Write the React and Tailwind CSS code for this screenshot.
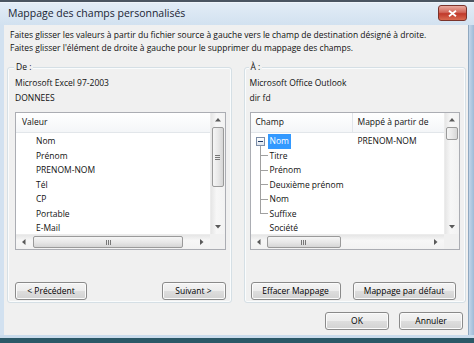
import React from 'react';

function Tri({ dir }) {
    const d = {
        up: 'M0 3.5 L3 0 L6 3.5 Z',
        down: 'M0 0 L3 3.5 L6 0 Z',
        left: 'M3.5 0 L0 3 L3.5 6 Z',
        right: 'M0 0 L3.5 3 L0 6 Z',
    }[dir];
    const vertical = dir === 'up' || dir === 'down';
    return (
        <svg width={vertical ? 6 : 4} height={vertical ? 4 : 6} viewBox={vertical ? '0 0 6 4' : '0 0 4 6'}>
            <path d={d} fill="#5a5a5a" />
        </svg>
    );
}

function VScroll({ thumb, grip }) {
    return (
        <div className="w-[15px] flex flex-col bg-[linear-gradient(90deg,#e6e6e6,#f7f7f7_40%,#f2f2f2)] border-l border-[#ececec]">
            <div className="h-[14px] flex items-center justify-center"><Tri dir="up" /></div>
            <div
                style={{ height: thumb }}
                className="mx-[1px] rounded-[2px] border border-[#9a9a9a] bg-[linear-gradient(90deg,#f5f5f5,#e8e8e8_50%,#d6d6d6)] flex items-center justify-center"
            >
                {grip && (
                    <div className="flex flex-col gap-[1px]">
                        <div className="w-[5px] h-[1px] bg-[#777]" />
                        <div className="w-[5px] h-[1px] bg-[#777]" />
                        <div className="w-[5px] h-[1px] bg-[#777]" />
                    </div>
                )}
            </div>
            <div className="flex-1" />
            <div className="h-[14px] flex items-center justify-center"><Tri dir="down" /></div>
        </div>
    );
}

function HScroll({ offset, thumb }) {
    return (
        <div className="h-[15px] flex bg-[linear-gradient(#e6e6e6,#f7f7f7_40%,#f2f2f2)] border-t border-[#ececec]">
            <div className="w-[16px] flex items-center justify-center"><Tri dir="left" /></div>
            <div
                style={{ width: thumb, marginLeft: offset }}
                className="my-[1px] rounded-[2px] border border-[#9a9a9a] bg-[linear-gradient(#f5f5f5,#e8e8e8_50%,#d6d6d6)] flex items-center justify-center"
            >
                <div className="flex gap-[1px] h-[5px]">
                    <div className="w-[1px] bg-[#777]" />
                    <div className="w-[1px] bg-[#777]" />
                    <div className="w-[1px] bg-[#777]" />
                </div>
            </div>
            <div className="flex-1" />
            <div className="w-[16px] flex items-center justify-center"><Tri dir="right" /></div>
        </div>
    );
}

function Btn({ children, w }) {
    return (
        <button
            style={{ width: w }}
            className="h-[18px] rounded-[3px] border border-[#8a8a8a] bg-[linear-gradient(#f4f4f4,#ececec_50%,#dedede_50%,#d2d2d2)] shadow-[inset_0_0_0_1px_#fbfbfb] text-[8.5px] leading-none text-black"
        >
            {children}
        </button>
    );
}

function Group({ label, children, px }) {
    return (
        <div className={`flex-1 border border-[#d5dfe5] rounded-[3px] shadow-[inset_0_0_0_1px_#fafcfd] flex flex-col ${px}`}>
            <div className="-mt-[7px] -ml-[1px] px-[2px] w-fit bg-[#f0f0f0] leading-[12px]">{label}</div>
            {children}
        </div>
    );
}

const leftItems = ['Nom', 'Prénom', 'PRENOM-NOM', 'Tél', 'CP', 'Portable', 'E-Mail'];
const children = ['Titre', 'Prénom', 'Deuxième prénom', 'Nom', 'Suffixe'];

export default function App() {
    return (
        <div className="w-[474px] h-[343px] flex flex-col overflow-hidden bg-[#2b5867] font-['Open_Sans',sans-serif] text-[8.5px] text-[#111]">
            <div className="h-[2px] bg-[#4a5561]" />
            <div className="h-[23px] flex items-center pl-[8px] pr-[7px] bg-[linear-gradient(#e2ecf6,#d2e1f0)] border-t border-[#eef4fa]">
                <span className="text-[10.5px] text-[#1a2533]">Mappage des champs personnalisés</span>
                <div className="ml-auto mt-[-2px] w-[29px] h-[16px] rounded-[3px] border border-[#7a332b] bg-[linear-gradient(#e9aaa0,#d2675a_45%,#c0392b_55%,#d96a50)] flex items-center justify-center">
                    <svg width="9" height="7" viewBox="0 0 9 7">
                        <path d="M1 0.8 L8 6.2 M8 0.8 L1 6.2" stroke="#fff" strokeWidth="1.8" />
                    </svg>
                </div>
            </div>
            <div className="flex-1 flex">
                <div className="w-[4px] bg-[#d2e1f0]" />
                <div className="flex-1 bg-[#f0f0f0] flex flex-col pt-[3px] pb-[5px] pl-[3px] pr-[2px]">
                    <div className="pl-[3px] leading-[13px]">
                        <p>Faites glisser les valeurs à partir du fichier source à gauche vers le champ de destination désigné à droite.</p>
                        <p>Faites glisser l'élément de droite à gauche pour le supprimer du mappage des champs.</p>
                    </div>
                    <div className="mt-[13px] flex gap-[12px]">
                        <Group label="De :" px="pl-[7px] pr-[5px]">
                            <div className="pt-[2px] leading-[15px]">
                                <p>Microsoft Excel 97-2003</p>
                                <p>DONNEES</p>
                            </div>
                            <div className="mt-[7px] h-[138px] border border-[#abadb3] bg-white flex flex-col">
                                <div className="flex-1 flex min-h-0">
                                    <div className="flex-1 overflow-hidden">
                                        <div className="h-[20px] flex items-center pl-[6px] bg-[linear-gradient(#ffffff,#f4f6f8)] border-b border-[#e2e6ea]">Valeur</div>
                                        <div className="pt-[1px]">
                                            {leftItems.map((t) => (
                                                <div key={t} className="h-[14.5px] leading-[14.5px] pl-[20px]">{t}</div>
                                            ))}
                                        </div>
                                    </div>
                                    <VScroll thumb={60} grip />
                                </div>
                                <div className="flex">
                                    <div className="flex-1"><HScroll offset={1} thumb={150} /></div>
                                    <div className="w-[15px] bg-[#f0f0f0]" />
                                </div>
                            </div>
                            <div className="mt-[32px] pb-[2px] flex justify-between">
                                <Btn w={72}>&lt; Précédent</Btn>
                                <Btn w={64}>Suivant &gt;</Btn>
                            </div>
                        </Group>
                        <Group label="À :" px="pl-[5px] pr-[5px]">
                            <div className="pt-[2px] leading-[15px]">
                                <p>Microsoft Office Outlook</p>
                                <p>dir fd</p>
                            </div>
                            <div className="mt-[7px] h-[138px] border border-[#abadb3] bg-white flex flex-col">
                                <div className="flex-1 flex min-h-0">
                                    <div className="flex-1 overflow-hidden">
                                        <div className="h-[20px] flex bg-[linear-gradient(#ffffff,#f4f6f8)] border-b border-[#e2e6ea]">
                                            <div className="w-[102px] pl-[5px] flex items-center border-r border-[#e2e6ea]">Champ</div>
                                            <div className="pl-[5px] flex items-center whitespace-nowrap">Mappé à partir de</div>
                                        </div>
                                        <div className="pt-[1px]">
                                            <div className="h-[14.5px] flex">
                                                <div className="w-[102px] flex pl-[5px]">
                                                    <div className="w-[9px] flex flex-col">
                                                        <div className="h-[3px]" />
                                                        <div className="h-[9px] border border-[#7d8ea8] bg-[linear-gradient(#ffffff,#dfe6ee)] flex items-center justify-center">
                                                            <div className="w-[5px] h-[1px] bg-[#1f3a66]" />
                                                        </div>
                                                        <div className="flex-1 ml-[4px] border-l border-[#a0a0a0]" />
                                                    </div>
                                                    <div className="ml-[3px] px-[2px] bg-[#3399ff] text-white leading-[14.5px]">Nom</div>
                                                </div>
                                                <div className="pl-[5px] leading-[14.5px]">PRENOM-NOM</div>
                                            </div>
                                            {children.map((t, i) => (
                                                <div key={t} className="h-[14.5px] flex">
                                                    <div className="ml-[9px] w-[8px] flex flex-col">
                                                        <div className="flex-1 border-l border-b border-[#a0a0a0]" />
                                                        <div className={`flex-1 ${i < children.length - 1 ? 'border-l border-[#a0a0a0]' : ''}`} />
                                                    </div>
                                                    <div className="pl-[2px] leading-[14.5px] whitespace-nowrap">{t}</div>
                                                </div>
                                            ))}
                                            <div className="h-[14.5px] leading-[14.5px] pl-[19px]">Société</div>
                                        </div>
                                    </div>
                                    <VScroll thumb={13} />
                                </div>
                                <div className="flex">
                                    <div className="flex-1"><HScroll offset={0} thumb={74} /></div>
                                    <div className="w-[15px] bg-[#f0f0f0]" />
                                </div>
                            </div>
                            <div className="mt-[32px] pb-[2px] pl-[1px] flex gap-[12px]">
                                <Btn w={90}>Effacer Mappage</Btn>
                                <Btn w={103}>Mappage par défaut</Btn>
                            </div>
                        </Group>
                    </div>
                    <div className="mt-[9px] flex justify-end gap-[10px] pr-[3px]">
                        <Btn w={64}>OK</Btn>
                        <Btn w={64}>Annuler</Btn>
                    </div>
                </div>
                <div className="w-[6px] bg-[linear-gradient(90deg,#c3d6ea,#9fbbd7)] border-l border-[#8fa8c0]" />
            </div>
            <div className="h-[3px] bg-[#c9dbec]" />
            <div className="h-[5px] bg-[#2b5867]" />
        </div>
    );
}
